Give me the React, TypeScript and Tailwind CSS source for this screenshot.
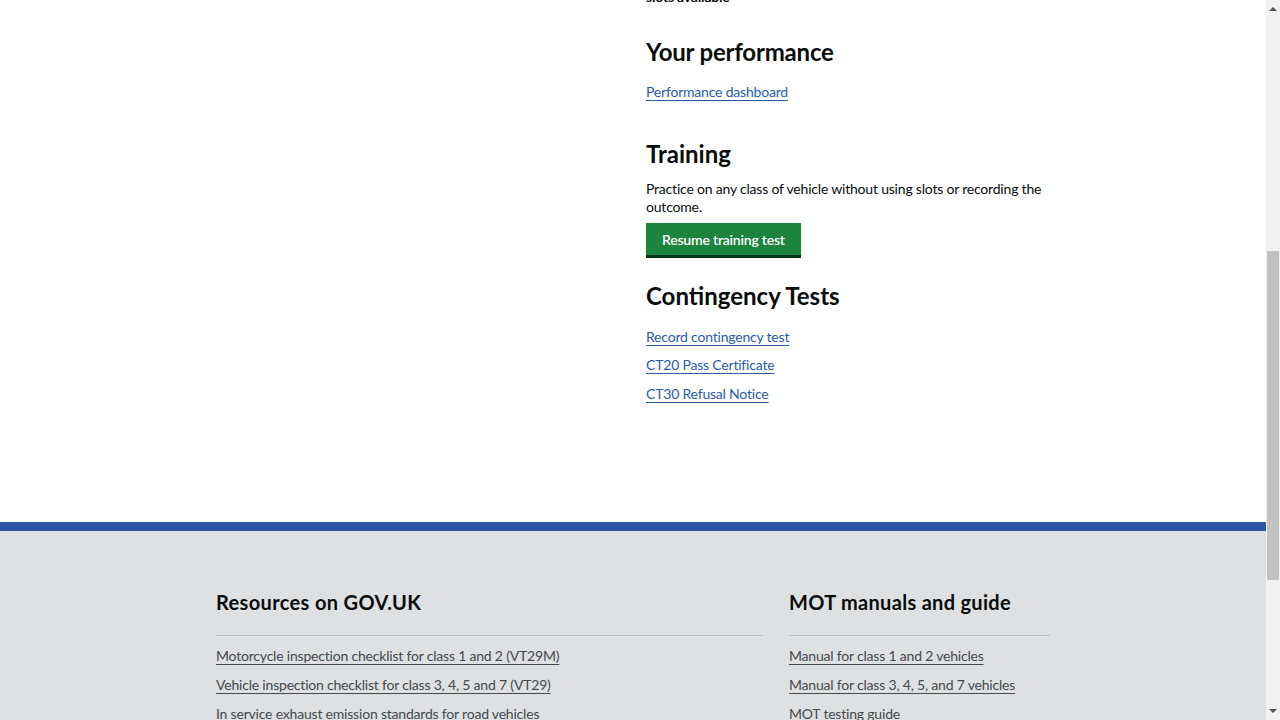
import React from "react";

const linkCls =
  "text-[#2a5caa] underline decoration-1 underline-offset-[3px] text-[14px] leading-[20px] tracking-[-0.2px]";
const footLink =
  "text-[#454a4d] underline decoration-1 underline-offset-[3px] text-[14px] leading-[20px] tracking-[-0.2px]";

function Scrollbar() {
  return (
    <div className="flex w-[14px] shrink-0 flex-col bg-[#f1f1f1]">
      <div className="flex h-[17px] items-center justify-center">
        <svg width="8" height="5" viewBox="0 0 8 5">
          <path d="M0 5 L4 1 L8 5 Z" fill="#505050" />
        </svg>
      </div>
      <div className="h-[234px]" />
      <div className="mx-[1px] h-[329px] bg-[#c1c1c1]" />
      <div className="flex-1" />
      <div className="flex h-[17px] items-center justify-center">
        <svg width="8" height="5" viewBox="0 0 8 5">
          <path d="M0 0 L4 4 L8 0 Z" fill="#505050" />
        </svg>
      </div>
    </div>
  );
}

export default function App() {
  return (
    <div
      className="flex h-[720px] w-[1280px] overflow-hidden bg-white text-[#0b0c0c]"
      style={{ fontFamily: "Lato, 'Noto Sans', sans-serif" }}
    >
      <div className="flex min-w-0 flex-1 flex-col">
        <main className="mx-auto grid w-[834px] grid-cols-[430px_404px] pb-[118px]">
          <div />
          <div className="flex flex-col items-start">
            <p className="-mt-[12px] h-[18px] text-[14px] font-bold leading-[18px] tracking-[-0.2px]">
              slots available
            </p>
            <h2 className="mt-[31px] text-[24px] font-bold leading-[30px] tracking-[-0.2px]">
              Your performance
            </h2>
            <a href="#" className={`mt-[15px] ${linkCls}`}>
              Performance dashboard
            </a>
            <h2 className="mt-[37px] text-[24px] font-bold leading-[30px]">
              Training
            </h2>
            <p className="mt-[11px] text-[14px] leading-[18px] tracking-[-0.2px]">
              Practice on any class of vehicle without using slots or recording the outcome.
            </p>
            <button className="mt-[7px] h-[35px] border-b-[3px] border-[#003618] bg-[#1c843c] px-[16px] text-[14px] font-semibold tracking-[-0.2px] text-white">
              Resume training test
            </button>
            <h2 className="mt-[23px] text-[24px] font-bold leading-[30px]">
              Contingency Tests
            </h2>
            <a href="#" className={`mt-[16px] ${linkCls}`}>
              Record contingency test
            </a>
            <a href="#" className={`mt-[8px] ${linkCls}`}>
              CT20 Pass Certificate
            </a>
            <a href="#" className={`mt-[9px] ${linkCls}`}>
              CT30 Refusal Notice
            </a>
          </div>
        </main>
        <footer className="flex-1 border-t-[9px] border-[#2d55a5] bg-[#dee0e2]">
          <div className="mx-auto grid w-[834px] grid-cols-[547px_261px] gap-x-[26px] pt-[59px]">
            <div className="flex flex-col items-start">
              <h2 className="text-[20px] font-bold leading-[25px] tracking-[0.35px]">
                Resources on GOV.UK
              </h2>
              <div className="mt-[20px] h-px w-full bg-[#bfc1c3]" />
              <a href="#" className={`mt-[10px] ${footLink}`}>
                Motorcycle inspection checklist for class 1 and 2 (VT29M)
              </a>
              <a href="#" className={`mt-[9px] ${footLink}`}>
                Vehicle inspection checklist for class 3, 4, 5 and 7 (VT29)
              </a>
              <a href="#" className={`mt-[9px] ${footLink}`}>
                In service exhaust emission standards for road vehicles
              </a>
            </div>
            <div className="flex flex-col items-start">
              <h2 className="text-[20px] font-bold leading-[25px] tracking-[0.3px]">
                MOT manuals and guide
              </h2>
              <div className="mt-[20px] h-px w-full bg-[#bfc1c3]" />
              <a href="#" className={`mt-[10px] ${footLink}`}>
                Manual for class 1 and 2 vehicles
              </a>
              <a href="#" className={`mt-[9px] ${footLink}`}>
                Manual for class 3, 4, 5, and 7 vehicles
              </a>
              <a href="#" className={`mt-[9px] ${footLink}`}>
                MOT testing guide
              </a>
            </div>
          </div>
        </footer>
      </div>
      <Scrollbar />
    </div>
  );
}
